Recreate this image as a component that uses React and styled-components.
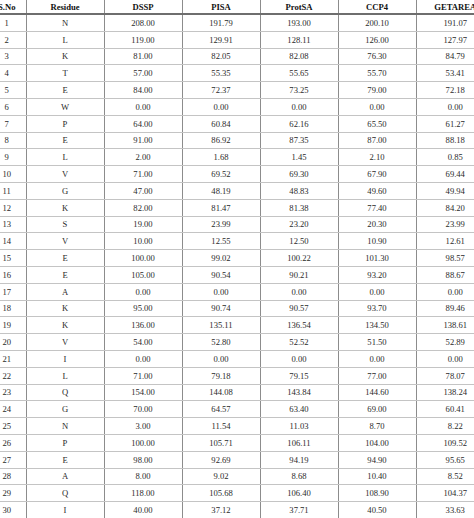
import React from 'react';
import styled, { createGlobalStyle } from 'styled-components';

const rows = [
    ['1', 'N', '208.00', '191.79', '193.00', '200.10', '191.07'],
    ['2', 'L', '119.00', '129.91', '128.11', '126.00', '127.97'],
    ['3', 'K', '81.00', '82.05', '82.08', '76.30', '84.79'],
    ['4', 'T', '57.00', '55.35', '55.65', '55.70', '53.41'],
    ['5', 'E', '84.00', '72.37', '73.25', '79.00', '72.18'],
    ['6', 'W', '0.00', '0.00', '0.00', '0.00', '0.00'],
    ['7', 'P', '64.00', '60.84', '62.16', '65.50', '61.27'],
    ['8', 'E', '91.00', '86.92', '87.35', '87.00', '88.18'],
    ['9', 'L', '2.00', '1.68', '1.45', '2.10', '0.85'],
    ['10', 'V', '71.00', '69.52', '69.30', '67.90', '69.44'],
    ['11', 'G', '47.00', '48.19', '48.83', '49.60', '49.94'],
    ['12', 'K', '82.00', '81.47', '81.38', '77.40', '84.20'],
    ['13', 'S', '19.00', '23.99', '23.20', '20.30', '23.99'],
    ['14', 'V', '10.00', '12.55', '12.50', '10.90', '12.61'],
    ['15', 'E', '100.00', '99.02', '100.22', '101.30', '98.57'],
    ['16', 'E', '105.00', '90.54', '90.21', '93.20', '88.67'],
    ['17', 'A', '0.00', '0.00', '0.00', '0.00', '0.00'],
    ['18', 'K', '95.00', '90.74', '90.57', '93.70', '89.46'],
    ['19', 'K', '136.00', '135.11', '136.54', '134.50', '138.61'],
    ['20', 'V', '54.00', '52.80', '52.52', '51.50', '52.89'],
    ['21', 'I', '0.00', '0.00', '0.00', '0.00', '0.00'],
    ['22', 'L', '71.00', '79.18', '79.15', '77.00', '78.07'],
    ['23', 'Q', '154.00', '144.08', '143.84', '144.60', '138.24'],
    ['24', 'G', '70.00', '64.57', '63.40', '69.00', '60.41'],
    ['25', 'N', '3.00', '11.54', '11.03', '8.70', '8.22'],
    ['26', 'P', '100.00', '105.71', '106.11', '104.00', '109.52'],
    ['27', 'E', '98.00', '92.69', '94.19', '94.90', '95.65'],
    ['28', 'A', '8.00', '9.02', '8.68', '10.40', '8.52'],
    ['29', 'Q', '118.00', '105.68', '106.40', '108.90', '104.37'],
    ['30', 'I', '40.00', '37.12', '37.71', '40.50', '33.63'],
];

const headers = ['S.No', 'Residue', 'DSSP', 'PISA', 'ProtSA', 'CCP4', 'GETAREA'];

const GlobalStyle = createGlobalStyle`
    html, body {
        margin: 0;
        padding: 0;
        background: #fff;
        overflow: hidden;
    }
`;

const Frame = styled.div`
    width: 474px;
    height: 518px;
    overflow: hidden;
    background: #fff;
`;

const Table = styled.table`
    border-collapse: collapse;
    table-layout: fixed;
    width: 506px;
    margin-left: -12px;
    font-family: 'Liberation Serif', 'Times New Roman', serif;
    font-size: 8.6px;
`;

const HeadCell = styled.th`
    height: 13px;
    padding: 0;
    font-weight: 700;
    color: #111;
    text-align: center;
    border-left: 1px solid #8c8c8c;
    border-bottom: 2px solid #6e6e6e;
    &:first-child {
        border-left: none;
    }
`;

const Cell = styled.td`
    height: 15.8px;
    padding: 0;
    color: #2a2a2a;
    text-align: center;
    border-left: 1px solid #8c8c8c;
    border-bottom: 1px solid #c4c4c4;
    &:first-child {
        border-left: none;
    }
`;

export default function App() {
    return (
        <Frame>
            <GlobalStyle />
            <Table>
                <colgroup>
                    <col style={{ width: 38 }} />
                    {headers.slice(1).map((h) => (
                        <col key={h} style={{ width: 78 }} />
                    ))}
                </colgroup>
                <thead>
                    <tr>
                        {headers.map((h) => (
                            <HeadCell key={h}>{h}</HeadCell>
                        ))}
                    </tr>
                </thead>
                <tbody>
                    {rows.map((r) => (
                        <tr key={r[0]}>
                            {r.map((v, i) => (
                                <Cell key={i}>{v}</Cell>
                            ))}
                        </tr>
                    ))}
                </tbody>
            </Table>
        </Frame>
    );
}
